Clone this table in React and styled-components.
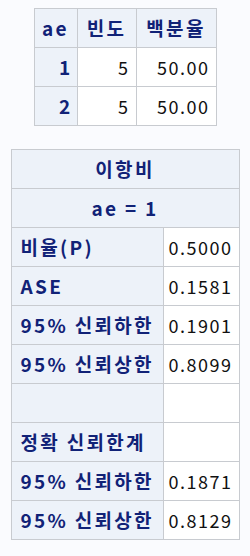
import React from "react";
import styled, { createGlobalStyle } from "styled-components";

const Global = createGlobalStyle`
  html, body { margin: 0; padding: 0; background: #fafbfe; }
  body { padding: 8px; font-family: "Noto Sans CJK KR", "Noto Sans", sans-serif; }
`;

const Page = styled.div`
  display: flex;
  flex-direction: column;
  align-items: center;
  gap: 23px;
`;

const Table = styled.table`
  border-collapse: collapse;
  border: 1px solid #c1c1c1;
  background: #ffffff;
`;

const Cell = styled.td`
  border: 1px solid #c8cbd0;
  height: 22px;
  line-height: 22px;
  padding: 8px 8px;
  box-sizing: content-box;
  white-space: nowrap;
  width: ${(p) => (p.$w ? `${p.$w}px` : "auto")};
`;

const Head = styled(Cell).attrs({ as: "th" })`
  background: #edf2f9;
  color: #112277;
  font-family: "Noto Sans CJK KR", sans-serif;
  font-weight: 700;
  font-size: 19px;
  letter-spacing: 2.3px;
  padding-left: ${(p) => (p.$align === "left" ? "9px" : "4px")};
  padding-right: 4px;
  text-align: ${(p) => p.$align || "center"};
`;

const Data = styled(Cell)`
  background: #ffffff;
  color: #111111;
  font-family: "Noto Sans CJK KR", sans-serif;
  font-weight: 400;
  font-size: 18px;
  letter-spacing: 1.5px;
  padding-left: 5px;
  padding-right: 6px;
  text-align: right;
`;

const freq = [
  { ae: "1", n: "5", pct: "50.00" },
  { ae: "2", n: "5", pct: "50.00" },
];

const stats = [
  ["비율(P)", "0.5000"],
  ["ASE", "0.1581"],
  ["95% 신뢰하한", "0.1901"],
  ["95% 신뢰상한", "0.8099"],
  ["", ""],
  ["정확 신뢰한계", ""],
  ["95% 신뢰하한", "0.1871"],
  ["95% 신뢰상한", "0.8129"],
];

export default function App() {
  return (
    <>
      <Global />
      <Page>
        <Table>
          <thead>
            <tr>
              <Head $w={34}>ae</Head>
              <Head $w={50}>빈도</Head>
              <Head $w={71}>백분율</Head>
            </tr>
          </thead>
          <tbody>
            {freq.map((r) => (
              <tr key={r.ae}>
                <Head $align="right">{r.ae}</Head>
                <Data>{r.n}</Data>
                <Data>{r.pct}</Data>
              </tr>
            ))}
          </tbody>
        </Table>
        <Table>
          <thead>
            <tr>
              <Head colSpan={2}>이항비</Head>
            </tr>
            <tr>
              <Head colSpan={2}>ae = 1</Head>
            </tr>
          </thead>
          <tbody>
            {stats.map(([label, value], i) => (
              <tr key={i}>
                <Head $align="left" $w={138}>{label}</Head>
                <Data $w={64}>{value}</Data>
              </tr>
            ))}
          </tbody>
        </Table>
      </Page>
    </>
  );
}
